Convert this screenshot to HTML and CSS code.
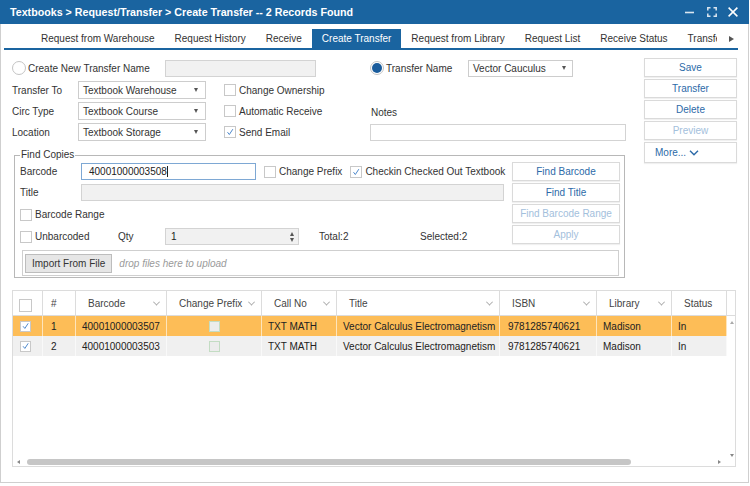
FILE: index.html
```html
<!DOCTYPE html>
<html>
<head>
<meta charset="utf-8">
<title>Create Transfer</title>
<link rel="stylesheet" href="styles.css">
</head>
<body>
<div class="window">
  <div class="titlebar">
    <span class="title">Textbooks &gt; Request/Transfer &gt; Create Transfer -- 2 Records Found</span>
    <svg class="wi wi-min" width="9" height="12" viewBox="0 0 9 12"><path d="M0 6.5h9" stroke="#dbe6f0" stroke-width="1.6"/></svg>
    <svg class="wi wi-max" width="10" height="10" viewBox="0 0 10 10" fill="none" stroke="#dbe6f0" stroke-width="1.5"><path d="M0.8 3.5V0.8h2.7M6.5 0.8h2.7v2.7M9.2 6.5v2.7H6.5M3.5 9.2H0.8V6.5"/></svg>
    <svg class="wi wi-close" width="10" height="10" viewBox="0 0 10 10" stroke="#fff" stroke-width="1.5"><path d="M0.6 0.6l8.8 8.8M9.4 0.6l-8.8 8.8"/></svg>
  </div>
  <div class="panel">
    <div class="tabbar">
      <div class="tabs">
        <span class="tab">Request from Warehouse</span>
        <span class="tab">Request History</span>
        <span class="tab">Receive</span>
        <span class="tab active">Create Transfer</span>
        <span class="tab">Request from Library</span>
        <span class="tab">Request List</span>
        <span class="tab">Receive Status</span>
        <span class="tab">Transfer Status</span>
      </div>
      <div class="tab-arrow"><span class="tri-right"></span></div>
    </div>

    <div class="content">
      <div class="top">
        <div class="form">
          <div class="form-grid">
            <div class="r1a">
              <div class="radio-label"><span class="radio"></span><span>Create New Transfer Name</span></div>
              <div class="field disabled w151"></div>
            </div>
            <div class="r1b">
              <div class="radio-label w98"><span class="radio on"></span><span>Transfer Name</span></div>
              <div class="select w105"><span>Vector Cauculus</span><span class="tri-down"></span></div>
            </div>

            <div class="lbl">Transfer To</div>
            <div class="select"><span>Textbook Warehouse</span><span class="tri-down"></span></div>
            <div class="chk col3"><span class="cb"></span><span>Change Ownership</span></div>
            <div class="notes">
              <div class="notes-lbl">Notes</div>
              <div class="field"></div>
            </div>

            <div class="lbl">Circ Type</div>
            <div class="select"><span>Textbook Course</span><span class="tri-down"></span></div>
            <div class="chk col3"><span class="cb"></span><span>Automatic Receive</span></div>

            <div class="lbl">Location</div>
            <div class="select"><span>Textbook Storage</span><span class="tri-down"></span></div>
            <div class="chk col3"><span class="cb"><svg width="12" height="12" viewBox="0 0 12 12"><path d="M3 6.2l2.2 2.8L9.4 2.6" fill="none" stroke="#3c7dc6" stroke-width="1.1"/></svg></span><span>Send Email</span></div>
          </div>

          <fieldset class="find">
            <legend>Find Copies</legend>
            <div class="find-inner">
              <div class="fl">
                <div class="lbl">Barcode</div>
                <div class="flex-row">
                  <div class="field focus w175"><span>40001000003508</span><span class="caret"></span></div>
                  <div class="chk ml8"><span class="cb"></span><span>Change Prefix</span></div>
                  <div class="chk ml8"><span class="cb"><svg width="12" height="12" viewBox="0 0 12 12"><path d="M3 6.2l2.2 2.8L9.4 2.6" fill="none" stroke="#3c7dc6" stroke-width="1.1"/></svg></span><span>Checkin Checked Out Textbook</span></div>
                </div>
                <div class="lbl">Title</div>
                <div class="flex-row"><div class="field disabled w423"></div></div>
                <div class="span2 chk"><span class="cb"></span><span>Barcode Range</span></div>
                <div class="span2 flex-row">
                  <div class="chk w98"><span class="cb"></span><span>Unbarcoded</span></div>
                  <span class="w47">Qty</span>
                  <div class="field disabled spin"><span>1</span><span class="spin-arrows"><span class="tri-up"></span><span class="tri-down"></span></span></div>
                  <span class="total">Total:2</span>
                  <span>Selected:2</span>
                </div>
              </div>
              <div class="fbtns">
                <div class="btn">Find Barcode</div>
                <div class="btn">Find Title</div>
                <div class="btn off">Find Barcode Range</div>
                <div class="btn off">Apply</div>
              </div>
              <div class="upload">
                <span class="import">Import From File</span>
                <span class="drop">drop files here to upload</span>
              </div>
            </div>
          </fieldset>
        </div>

        <div class="actions">
          <div class="btn">Save</div>
          <div class="btn">Transfer</div>
          <div class="btn">Delete</div>
          <div class="btn off">Preview</div>
          <div class="btn more">More...<svg width="10" height="6" viewBox="0 0 10 6"><path d="M1 0.8l4 4 4-4" fill="none" stroke="#2c6aa8" stroke-width="1.4"/></svg></div>
        </div>
      </div>

      <div class="grid">
        <div class="ghead">
          <div class="hc hc-check"><span class="cb hcb"></span></div>
          <div class="hc hc-num">#</div>
          <div class="hc">Barcode<span class="chev"></span></div>
          <div class="hc">Change Prefix<span class="chev"></span></div>
          <div class="hc">Call No<span class="chev"></span></div>
          <div class="hc">Title<span class="chev"></span></div>
          <div class="hc">ISBN<span class="chev"></span></div>
          <div class="hc">Library<span class="chev"></span></div>
          <div class="hc">Status</div>
          <div class="hfill"></div>
        </div>
        <div class="gbody">
          <div class="rows">
            <div class="row sel">
              <div class="cell c-check"><span class="cb rcb"><svg width="10" height="10" viewBox="0 0 10 10"><path d="M2.3 5.3l2 2.4L8 2" fill="none" stroke="#3c7dc6" stroke-width="1"/></svg></span></div>
              <div class="cell c-num">1</div>
              <div class="cell">40001000003507</div>
              <div class="cell c-center"><span class="pbox"></span></div>
              <div class="cell">TXT MATH</div>
              <div class="cell">Vector Calculus Electromagnetism</div>
              <div class="cell c-isbn">9781285740621</div>
              <div class="cell">Madison</div>
              <div class="cell">In</div>
            </div>
            <div class="row alt">
              <div class="cell c-check"><span class="cb rcb"><svg width="10" height="10" viewBox="0 0 10 10"><path d="M2.3 5.3l2 2.4L8 2" fill="none" stroke="#3c7dc6" stroke-width="1"/></svg></span></div>
              <div class="cell c-num">2</div>
              <div class="cell">40001000003503</div>
              <div class="cell c-center"><span class="pbox"></span></div>
              <div class="cell">TXT MATH</div>
              <div class="cell">Vector Calculus Electromagnetism</div>
              <div class="cell c-isbn">9781285740621</div>
              <div class="cell">Madison</div>
              <div class="cell">In</div>
            </div>
          </div>
          <div class="vscroll"><span class="tri-up sm"></span><span class="tri-down sm"></span></div>
        </div>
        <div class="hscroll">
          <span class="tri-left"></span>
          <span class="thumb"></span>
          <span class="tri-right sm2"></span>
        </div>
      </div>
    </div>
  </div>
</div>
</body>
</html>
```
FILE: styles.css
```css
* { box-sizing: border-box; }
html, body { margin: 0; background: #fff; }
body { font-family: "Liberation Sans", Arial, sans-serif; font-size: 10px; color: #333; }

.window { width: 749px; }

.titlebar { height: 24px; background: #1a64a0; color: #fff; display: flex; align-items: center; padding: 0 11px 0 10px; }
.title { flex: 1; font-weight: bold; font-size: 10.7px; }
.wi { display: block; }
.wi-max { margin-left: 13px; }
.wi-close { margin-left: 11px; }

.panel { height: 459px; border: 1px solid #cfcfcf; border-top: none; }

.tabbar { display: flex; height: 26px; margin: 0 10px 0 3px; padding-top: 5px; border-bottom: 2px solid #1a64a0; }
.tabs { flex: 1; display: flex; overflow: hidden; white-space: nowrap; padding-left: 27px; }
.tab { padding: 0 10px; line-height: 19px; color: #333; flex: none; }
.tab.active { background: #1a64a0; color: #fff; }
.tab-arrow { width: 21px; display: flex; align-items: center; justify-content: flex-end; padding-right: 4px; }

.tri-right { width: 0; height: 0; border-top: 3px solid transparent; border-bottom: 3px solid transparent; border-left: 5px solid #555; }
.tri-left { width: 0; height: 0; border-top: 2.5px solid transparent; border-bottom: 2.5px solid transparent; border-right: 3px solid #888; }
.tri-down { width: 0; height: 0; border-left: 2.5px solid transparent; border-right: 2.5px solid transparent; border-top: 4px solid #555; }
.tri-up { width: 0; height: 0; border-left: 2.5px solid transparent; border-right: 2.5px solid transparent; border-bottom: 4px solid #555; }

.content { padding: 8px 11px 0 11px; }
.top { display: flex; }
.form { width: 614px; }

.form-grid { display: grid; grid-template-columns: 66px 128px 164px 256px; grid-template-rows: 20px 18px 18px 18px; row-gap: 3px; }
.r1a { grid-column: 1 / 4; display: flex; align-items: center; }
.r1b { grid-column: 4; display: flex; align-items: center; }
.radio-label { width: 153px; display: flex; align-items: center; gap: 2px; white-space: nowrap; }
.w98 { width: 98px; }
.radio { width: 14px; height: 14px; border-radius: 50%; border: 1px solid #c4c4c4; background: #fff; display: flex; align-items: center; justify-content: center; }
.radio.on::after { content: ""; width: 10px; height: 10px; border-radius: 50%; background: #1a5c9c; }

.lbl { display: flex; align-items: center; }
.field { height: 17px; border: 1px solid #d3d3d3; background: #fff; display: flex; align-items: center; flex: none; }
.field.disabled { background: #f1f1f1; }
.field.focus { border-color: #7ea8d4; padding-left: 7px; color: #222; }
.caret { width: 1px; height: 11px; background: #222; }
.w151 { width: 151px; }
.w175 { width: 175px; }
.w423 { width: 423px; }
.w47 { width: 47px; flex: none; }

.select { height: 18px; border: 1px solid #cdcdcd; background: #fff; display: flex; align-items: center; justify-content: space-between; padding: 0 7px 0 4px; }
.w105 { width: 105px; height: 17px; padding-right: 6px; }

.chk { display: flex; align-items: center; gap: 3px; white-space: nowrap; flex: none; }
.col3 { padding-left: 18px; }
.cb { width: 12px; height: 12px; border: 1px solid #c8c8c8; background: #fff; display: flex; align-items: center; justify-content: center; flex: none; }
.cb svg { display: block; }

.notes { grid-column: 4; grid-row: 2 / 5; display: flex; flex-direction: column; justify-content: flex-end; }
.notes-lbl { padding-left: 1px; margin-bottom: 6px; }

.find { margin: 8px 0 0 2px; width: 611px; border: 1px solid #b8b8b8; padding: 1px 4px 1px 5px; }
.find legend { padding: 0 1px; line-height: 12px; font-size: 10px; }
.find-inner { display: grid; grid-template-columns: 483px 108px; column-gap: 9px; row-gap: 4px; }
.fl { display: grid; grid-template-columns: 61px 422px; grid-template-rows: 19px 19px 21px 19px; row-gap: 2px; }
.flex-row { display: flex; align-items: center; white-space: nowrap; }
.span2 { grid-column: 1 / 3; }
.ml8 { margin-left: 8px; }
.spin { width: 134px; justify-content: space-between; padding: 0 4px 0 5px; color: #222; }
.spin-arrows { display: flex; flex-direction: column; gap: 2px; }
.total { margin-left: 20px; width: 101px; flex: none; }
.fbtns { display: flex; flex-direction: column; gap: 2px; }

.btn { height: 19px; border: 1px solid #dadada; background: #fff; color: #2c6aa8; display: flex; align-items: center; justify-content: center; box-shadow: 0 1px 1px rgba(0,0,0,0.06); white-space: nowrap; }
.btn.off { color: #a3c0dc; }
.btn.more { height: 21px; justify-content: flex-start; padding-left: 10px; gap: 3px; }

.upload { grid-column: 1 / 3; margin: 0 1px 0 2px; height: 26px; border: 1px solid #cfcfcf; display: flex; align-items: center; padding-left: 2px; }
.import { height: 19px; padding: 0 6px; border: 1px solid #bdbdbd; background: #e6e6e6; color: #333; display: flex; align-items: center; }
.drop { margin-left: 7px; font-style: italic; color: #9a9a9a; }

.actions { margin-left: auto; width: 93px; display: flex; flex-direction: column; gap: 2px; }

.grid { margin: 12px 1px 0 0; height: 177px; border: 1px solid #dcdcdc; display: flex; flex-direction: column; }
.ghead, .row { display: grid; grid-template-columns: 30px 33px 91px 95px 75px 163px 97px 75px 55px; }
.ghead { grid-template-columns: 30px 33px 91px 95px 75px 163px 97px 75px 55px 1fr; height: 25px; border-bottom: 1px solid #dcdcdc; color: #444; }
.hc { border-right: 1px solid #dcdcdc; display: flex; align-items: center; padding-left: 12px; white-space: nowrap; }
.hc-check { padding-left: 6px; padding-top: 4px; }
.hc-num { padding-left: 8px; }
.chev { margin-left: auto; margin-right: 7px; width: 5px; height: 5px; border-right: 1px solid #aaa; border-bottom: 1px solid #aaa; transform: rotate(45deg) translate(-1px, -1px); }
.hcb { width: 13px; height: 13px; }

.gbody { flex: 1; display: flex; }
.rows { width: 714px; }
.row { height: 20px; color: #222; }
.row.sel { background: #fdbd57; }
.row.alt { background: #f0f0f0; }
.cell { border-right: 1px solid rgba(255,255,255,0.6); padding-left: 6px; display: flex; align-items: center; white-space: nowrap; overflow: hidden; }
.c-check { padding-left: 7px; }
.c-num { padding-left: 8px; }
.c-isbn { padding-left: 8px; }
.c-center { justify-content: center; padding-left: 0; }
.rcb { width: 11px; height: 11px; }
.pbox { width: 11px; height: 11px; border: 1px solid #c3dcc3; background: #ececec; }

.vscroll { flex: 1; display: flex; flex-direction: column; justify-content: space-between; align-items: center; padding: 5px 0 1px 1px; }
.tri-up.sm { border-bottom: 3px solid #aaa; border-left-width: 2.5px; border-right-width: 2.5px; }
.tri-down.sm { border-top: 3px solid #888; }

.hscroll { height: 8px; display: flex; align-items: center; padding-left: 4px; }
.thumb { margin-left: 7px; width: 604px; height: 6px; border-radius: 3px; background: #c6c6c6; }
.tri-right.sm2 { margin-left: 87px; border-top-width: 2.5px; border-bottom-width: 2.5px; border-left: 3px solid #888; }
```
